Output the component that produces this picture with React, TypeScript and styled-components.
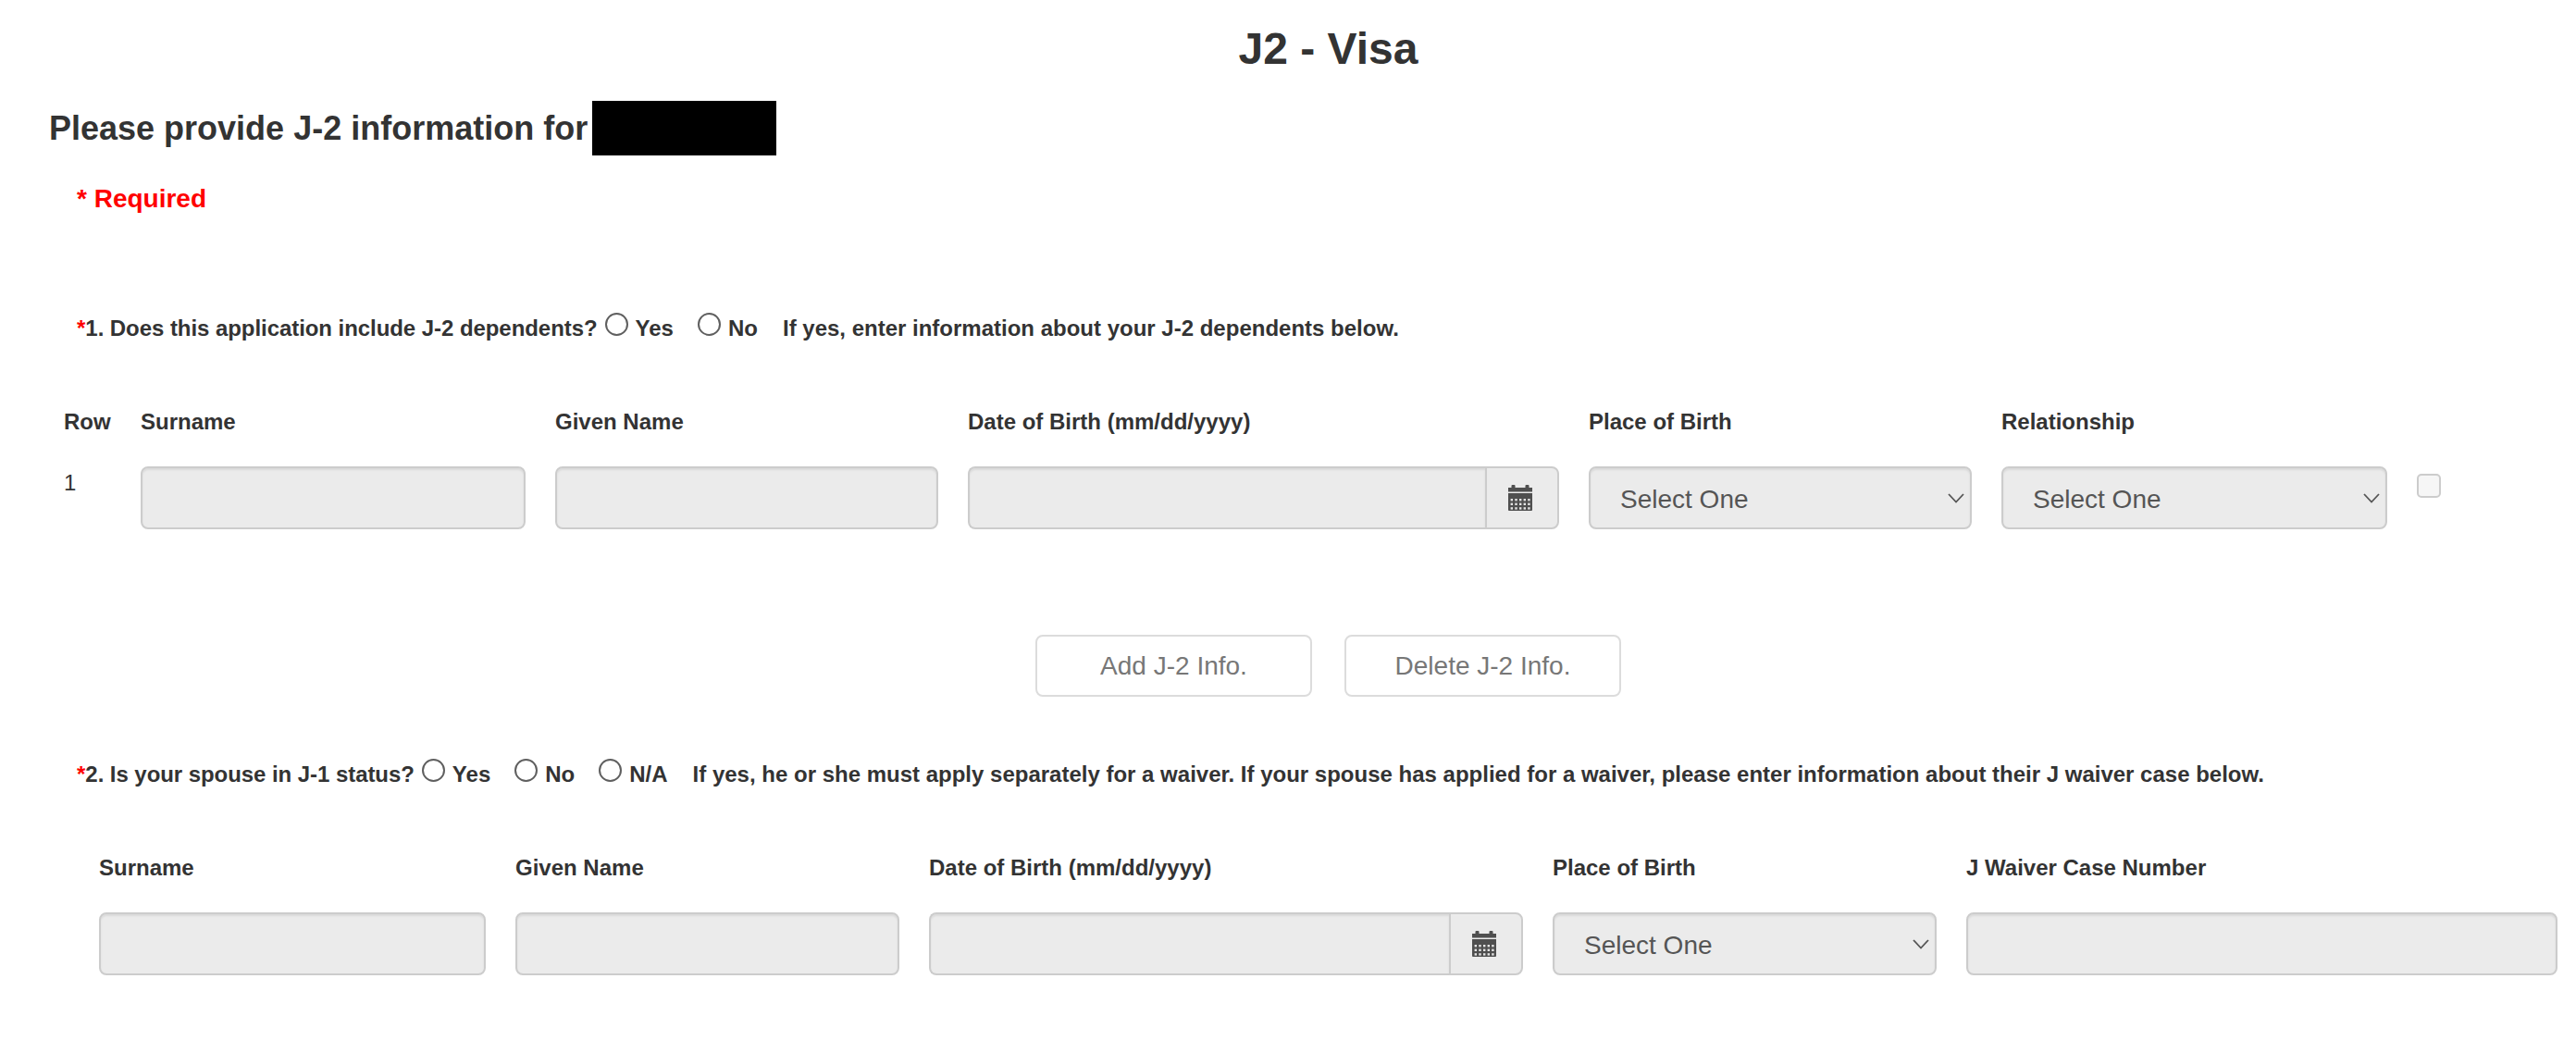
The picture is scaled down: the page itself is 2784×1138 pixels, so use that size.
import styled, { createGlobalStyle } from "styled-components";

const FONT = `"Liberation Sans", Arial, sans-serif`;

export default function App() {
  return (
    <>
      <GlobalStyle />
      <Page>
        <Title>J2 - Visa</Title>
        <SubHeading>
          Please provide J-2 information for
          <Redacted />
        </SubHeading>
        <Required>* Required</Required>

        <Question $top={100}>
          <Star>*</Star>
          <Prompt>1. Does this application include J-2 dependents?</Prompt>
          <Option label="Yes" />
          <Option label="No" />
          <span>If yes, enter information about your J-2 dependents below.</span>
        </Question>

        <DependentGrid>
          <HeadCell>Row</HeadCell>
          <HeadCell>Surname</HeadCell>
          <HeadCell>Given Name</HeadCell>
          <HeadCell>Date of Birth (mm/dd/yyyy)</HeadCell>
          <HeadCell>Place of Birth</HeadCell>
          <HeadCell>Relationship</HeadCell>
          <span />

          <RowNumber>1</RowNumber>
          <TextInput disabled />
          <TextInput disabled />
          <DateInput />
          <SelectInput />
          <SelectInput />
          <RowCheck type="checkbox" disabled />
        </DependentGrid>

        <Buttons>
          <ActionButton disabled>Add J-2 Info.</ActionButton>
          <ActionButton disabled>Delete J-2 Info.</ActionButton>
        </Buttons>

        <Question $top={64}>
          <Star>*</Star>
          <Prompt>2. Is your spouse in J-1 status?</Prompt>
          <Option label="Yes" />
          <Option label="No" />
          <Option label="N/A" />
          <span>
            If yes, he or she must apply separately for a waiver. If your spouse
            has applied for a waiver, please enter information about their J
            waiver case below.
          </span>
        </Question>

        <SpouseGrid>
          <HeadCell>Surname</HeadCell>
          <HeadCell>Given Name</HeadCell>
          <HeadCell>Date of Birth (mm/dd/yyyy)</HeadCell>
          <HeadCell>Place of Birth</HeadCell>
          <HeadCell>J Waiver Case Number</HeadCell>

          <TextInput disabled />
          <TextInput disabled />
          <DateInput />
          <SelectInput />
          <TextInput disabled />
        </SpouseGrid>
      </Page>
    </>
  );
}

function Option({ label }: { label: string }) {
  return (
    <OptionLabel>
      <Radio type="radio" disabled />
      {label}
    </OptionLabel>
  );
}

function DateInput() {
  return (
    <DateGroup>
      <DateField disabled />
      <DateAddon>
        <CalendarIcon />
      </DateAddon>
    </DateGroup>
  );
}

function SelectInput() {
  return (
    <SelectWrap>
      <Select disabled>
        <option>Select One</option>
      </Select>
      <Chevron viewBox="0 0 18 11" width="18" height="11">
        <path d="M1 1l8 8.5L17 1" fill="none" stroke="#555" strokeWidth="1.8" />
      </Chevron>
    </SelectWrap>
  );
}

function CalendarIcon() {
  const cols = [2.6, 7.3, 12, 16.6, 21.2];
  const rows = [15, 19.6, 24.2];
  return (
    <svg viewBox="0 0 26 28" width="26" height="28">
      <path
        d="M0 3h3.5V1q0-1 1-1h2q1 0 1 1v2h11V1q0-1 1-1h2q1 0 1 1v2H26v4.5H0z"
        fill="#4f4f4f"
      />
      <path d="M0 9h26v18q0 1-1 1H1q-1 0-1-1z" fill="#4f4f4f" />
      {rows.map((y) =>
        cols.map((x) => (
          <rect key={`${x}-${y}`} x={x} y={y} width="2.4" height="2.4" fill="#e4e4e4" />
        ))
      )}
    </svg>
  );
}

const GlobalStyle = createGlobalStyle`
  html, body {
    margin: 0;
    background: #fff;
  }
  body {
    font-family: ${FONT};
    color: #333;
  }
`;

const Page = styled.div`
  width: 2784px;
  height: 1138px;
  box-sizing: border-box;
  padding-top: 23px;
  overflow: hidden;
`;

const Title = styled.h1`
  margin: 0 0 0 87px;
  font-size: 48px;
  line-height: 60px;
  font-weight: 700;
  text-align: center;
`;

const SubHeading = styled.h2`
  display: flex;
  align-items: center;
  gap: 5px;
  margin: 26px 0 0 53px;
  font-size: 36px;
  font-weight: 700;
  height: 59px;
`;

const Redacted = styled.span`
  display: block;
  width: 199px;
  height: 59px;
  background: #000;
`;

const Required = styled.div`
  margin: 27px 0 0 83px;
  font-size: 28px;
  line-height: 40px;
  font-weight: 700;
  color: #ff0000;
`;

const Question = styled.div<{ $top: number }>`
  display: flex;
  align-items: center;
  margin: ${(p) => p.$top}px 0 0 83px;
  font-size: 24px;
  line-height: 40px;
  font-weight: 700;
  white-space: nowrap;
`;

const Star = styled.span`
  color: #ff0000;
`;

const Prompt = styled.span`
  letter-spacing: -0.06px;
`;

const OptionLabel = styled.label`
  display: flex;
  align-items: center;
  gap: 8px;
  margin-left: 8px;
  margin-right: 18px;

  &:last-of-type {
    margin-right: 27px;
  }
`;

const Radio = styled.input`
  appearance: none;
  width: 25px;
  height: 25px;
  margin: 0 0 10px;
  border: 2px solid #5f5f5f;
  border-radius: 50%;
  background: #fff;
  box-sizing: border-box;
`;

const DependentGrid = styled.div`
  display: grid;
  grid-template-columns: 51px 416px 414px 639px 414px 417px 26px;
  column-gap: 32px;
  row-gap: 28px;
  align-items: start;
  margin: 61px 0 0 69px;
`;

const SpouseGrid = styled.div`
  display: grid;
  grid-template-columns: 418px 415px 642px 415px 639px;
  column-gap: 32px;
  row-gap: 28px;
  align-items: start;
  margin: 61px 0 0 107px;
`;

const HeadCell = styled.div`
  font-size: 24px;
  line-height: 40px;
  font-weight: 700;
  white-space: nowrap;
`;

const RowNumber = styled.div`
  font-size: 24px;
  line-height: 36px;
`;

const fieldStyle = `
  box-sizing: border-box;
  height: 68px;
  border: 2px solid #ccc;
  border-radius: 8px;
  background: #ebebeb;
  box-shadow: inset 0 2px 2px rgba(0, 0, 0, 0.075);
  font-family: ${FONT};
  font-size: 28px;
  color: #555;
  outline: none;
`;

const TextInput = styled.input`
  ${fieldStyle}
  width: 100%;
  margin: 0;
  padding: 0 24px;
`;

const DateGroup = styled.div`
  display: flex;
  width: 100%;
`;

const DateField = styled.input`
  ${fieldStyle}
  flex: 1;
  min-width: 0;
  margin: 0;
  padding: 0 24px;
  border-right: 0;
  border-radius: 8px 0 0 8px;
`;

const DateAddon = styled.div`
  display: flex;
  align-items: center;
  justify-content: center;
  box-sizing: border-box;
  width: 80px;
  height: 68px;
  padding-right: 4px;
  border: 2px solid #ccc;
  border-radius: 0 8px 8px 0;
  background: #ebebeb;
`;

const SelectWrap = styled.div`
  position: relative;
  width: 100%;
`;

const Select = styled.select`
  ${fieldStyle}
  appearance: none;
  width: 100%;
  margin: 0;
  padding: 2px 40px 0 32px;
  opacity: 1;
`;

const Chevron = styled.svg`
  position: absolute;
  right: 8px;
  top: 29px;
`;

const RowCheck = styled.input`
  appearance: none;
  box-sizing: border-box;
  width: 26px;
  height: 26px;
  margin: 8px 0 0;
  border: 2px solid #ccc;
  border-radius: 5px;
  background: #f6f6f6;
`;

const Buttons = styled.div`
  display: flex;
  justify-content: center;
  gap: 35px;
  margin: 114px 0 0 87px;
`;

const ActionButton = styled.button`
  box-sizing: border-box;
  width: 299px;
  height: 67px;
  border: 2px solid #dcdcdc;
  border-radius: 8px;
  background: #fff;
  font-family: ${FONT};
  font-size: 28px;
  color: #777;
`;
